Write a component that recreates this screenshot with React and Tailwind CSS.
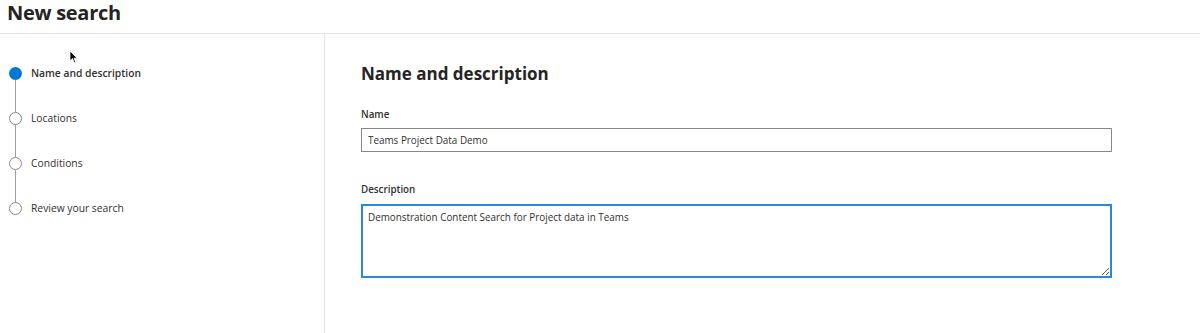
import React from "react";

const steps = [
  { label: "Name and description", active: true },
  { label: "Locations" },
  { label: "Conditions" },
  { label: "Review your search" },
];

const StepList = () => (
  <div className="flex flex-col">
    {steps.map((step, i) => (
      <div key={step.label} className="flex flex-col">
        <div className="flex items-center h-[13px]">
          {step.active ? (
            <span className="w-[13px] h-[13px] rounded-full bg-[#0078d4] shrink-0" />
          ) : (
            <span className="w-[13px] h-[13px] rounded-full border-[1.5px] border-[#8a8886] bg-white shrink-0" />
          )}
          <span
            className={`ml-[9px] text-[10.3px] leading-none text-[#323130] whitespace-nowrap ${
              step.active ? "font-semibold" : ""
            }`}
          >
            {step.label}
          </span>
        </div>
        {i < steps.length - 1 && (
          <div className="w-px h-[32px] bg-[#a19f9d] ml-[6px]" />
        )}
      </div>
    ))}
  </div>
);

const Cursor = () => (
  <svg
    className="absolute left-[69px] top-[50px]"
    width="9"
    height="14"
    viewBox="0 0 9 14"
  >
    <path d="M1 1 L1 11 L3.5 8.6 L5.4 12.8 L6.8 12.2 L5 8.2 L8.2 8.2 Z" fill="#000" stroke="#fff" strokeWidth="0.8" />
  </svg>
);

export default function App() {
  return (
    <div className="relative w-[1200px] h-[333px] bg-white overflow-hidden font-['Open_Sans',sans-serif] text-[#323130]">
      {/* Header */}
      <header className="h-[34px] border-b border-[#e6e6e6] px-[7px] flex items-start">
        <h1 className="text-[20px] font-bold leading-[26px] text-[#252423] tracking-[-0.3px]">
          New search
        </h1>
      </header>

      <div className="flex h-[299px]">
        {/* Steps */}
        <aside className="w-[325px] shrink-0 border-r border-[#e6e6e6] pt-[33px] pl-[9px]">
          <StepList />
        </aside>

        {/* Form */}
        <main className="pl-[36px] pt-[29px]">
          <h2 className="text-[17px] font-bold leading-[22px] text-[#252423]">
            Name and description
          </h2>
          <label className="block mt-[23px] text-[9.8px] font-semibold leading-[14px]">
            Name
          </label>
          <input
            readOnly
            value="Teams Project Data Demo"
            className="block mt-[6px] w-[751px] h-[24px] border border-[#8a8886] px-[6px] text-[9.9px] text-[#323130] outline-none"
          />
          <label className="block mt-[31px] text-[9.8px] font-semibold leading-[14px]">
            Description
          </label>
          <textarea
            readOnly
            value="Demonstration Content Search for Project data in Teams"
            className="block mt-[7px] w-[751px] h-[74px] border-2 border-[#2b88d8] px-[5px] pt-[3px] text-[9.9px] leading-[16px] text-[#323130] outline-none"
          />
        </main>
      </div>

      <Cursor />
    </div>
  );
}
